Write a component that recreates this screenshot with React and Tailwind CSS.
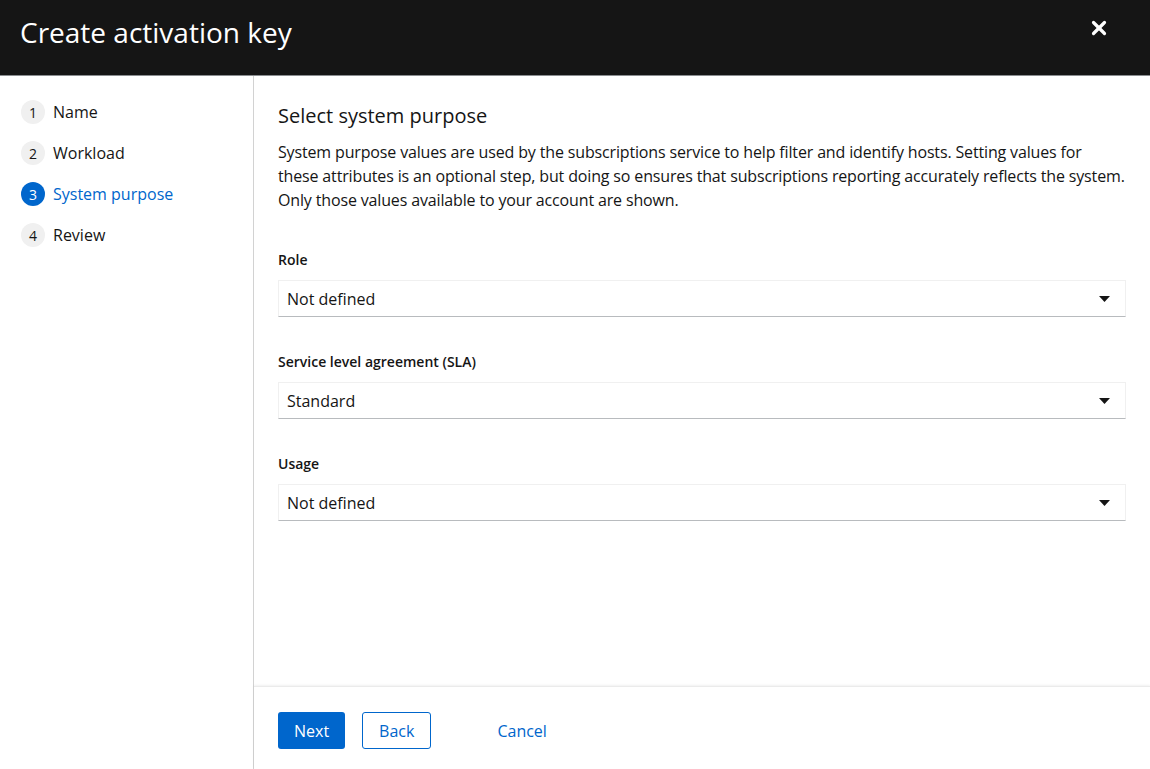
import { X } from 'lucide-react'

const steps = ['Name', 'Workload', 'System purpose', 'Review']
const current = 2

function Select({ label, value }) {
  return (
    <div className="mb-[34px]">
      <label className="mb-[10px] block text-[14px] font-semibold leading-[21px] text-[#151515]">{label}</label>
      <div className="flex h-[37px] items-center justify-between border border-[#f0f0f0] border-b-[#b8bbbe] bg-white pl-[8px] pr-[15px]">
        <span className="text-[16px] text-[#151515]">{value}</span>
        <svg width="11" height="6" viewBox="0 0 11 6" className="text-[#151515]">
          <path d="M0 0h11L5.5 6z" fill="currentColor" />
        </svg>
      </div>
    </div>
  )
}

export default function App() {
  return (
    <div
      className="flex h-[769px] w-[1150px] flex-col bg-white"
      style={{ fontFamily: '"Open Sans", "Liberation Sans", sans-serif' }}
    >
      <header className="flex h-[76px] shrink-0 items-start justify-between border-b border-[#8a8d90] bg-[#151515] pl-[20px] pr-[40px]">
        <h1 className="mt-[18px] text-[28px] leading-none text-white">Create activation key</h1>
        <X size={22} strokeWidth={3.5} className="mt-[17px] text-white" />
      </header>

      <div className="flex min-h-0 flex-1">
        <nav className="w-[254px] shrink-0 border-r border-[#d2d2d2] pl-[21px] pt-[24px]">
          <ol className="flex flex-col gap-[17px]">
            {steps.map((s, i) => (
              <li key={s} className="flex items-center gap-[8px]">
                <span
                  className={`flex h-[24px] w-[24px] items-center justify-center rounded-full text-[14px] ${
                    i === current ? 'bg-[#0066cc] text-white' : 'bg-[#f0f0f0] text-[#151515]'
                  }`}
                >
                  {i + 1}
                </span>
                <span className={`text-[16px] ${i === current ? 'text-[#0066cc]' : 'text-[#151515]'}`}>{s}</span>
              </li>
            ))}
          </ol>
        </nav>

        <main className="flex min-w-0 flex-1 flex-col">
          <div className="flex-1 px-[24px] pt-[26px]">
            <h2 className="mb-[10px] text-[20px] leading-[28px] text-[#151515]">Select system purpose</h2>
            <p className="mb-[37px] text-[16px] leading-[24px] tracking-[-0.15px] text-[#151515]">
              System purpose values are used by the subscriptions service to help filter and identify hosts. Setting
              values for
              <br />
              these attributes is an optional step, but doing so ensures that subscriptions reporting accurately
              reflects the system.
              <br />
              Only those values available to your account are shown.
            </p>
            <Select label="Role" value="Not defined" />
            <Select label="Service level agreement (SLA)" value="Standard" />
            <Select label="Usage" value="Not defined" />
          </div>

          <footer className="flex h-[83px] shrink-0 items-start border-t border-[#ebebeb] pl-[24px] pt-[25px] shadow-[0_-1px_2px_rgba(3,3,3,0.06)]">
            <button className="h-[37px] rounded-[3px] bg-[#0066cc] px-[16px] text-[16px] text-white">Next</button>
            <button className="ml-[17px] h-[37px] rounded-[3px] border border-[#0066cc] bg-white px-[16px] text-[16px] text-[#0066cc]">
              Back
            </button>
            <button className="ml-[50px] h-[37px] px-[16px] text-[16px] text-[#0066cc]">Cancel</button>
          </footer>
        </main>
      </div>
    </div>
  )
}
